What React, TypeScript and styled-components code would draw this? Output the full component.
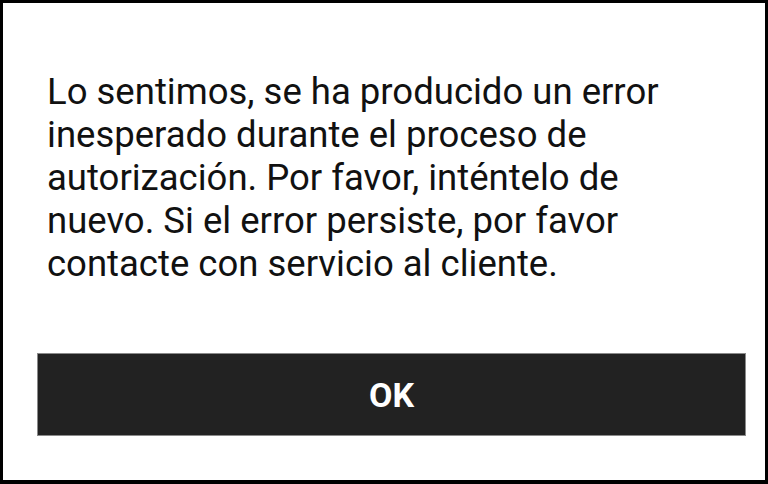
import React from 'react';
import styled, { createGlobalStyle } from 'styled-components';

const GlobalStyle = createGlobalStyle`
  html, body {
    margin: 0;
    padding: 0;
    background: #ffffff;
  }
`;

const Frame = styled.div`
  box-sizing: border-box;
  width: 768px;
  height: 484px;
  border: 3px solid #000;
  border-bottom-width: 4px;
  background: #fff;
  display: flex;
  flex-direction: column;
  padding: 67px 20px 0 34px;
  font-family: Roboto, "Noto Sans", sans-serif;
`;

const Message = styled.p`
  margin: 0 0 0 10px;
  width: 640px;
  font-size: 36.5px;
  line-height: 43px;
  color: #111;
`;

const OkButton = styled.button`
  margin-top: 68px;
  width: 709px;
  height: 83px;
  border: 1px solid #8a8a8a;
  background: #222;
  color: #fff;
  font-family: Roboto, "Noto Sans", sans-serif;
  font-weight: 700;
  font-size: 34px;
  cursor: pointer;
`;

const App = () => {
  return (
    <>
      <GlobalStyle />
      <Frame>
        <Message>
          Lo sentimos, se ha producido un error inesperado durante el proceso de
          autorización. Por favor, inténtelo de nuevo. Si el error persiste, por
          favor contacte con servicio al cliente.
        </Message>
        <OkButton>OK</OkButton>
      </Frame>
    </>
  );
};

export default App;
